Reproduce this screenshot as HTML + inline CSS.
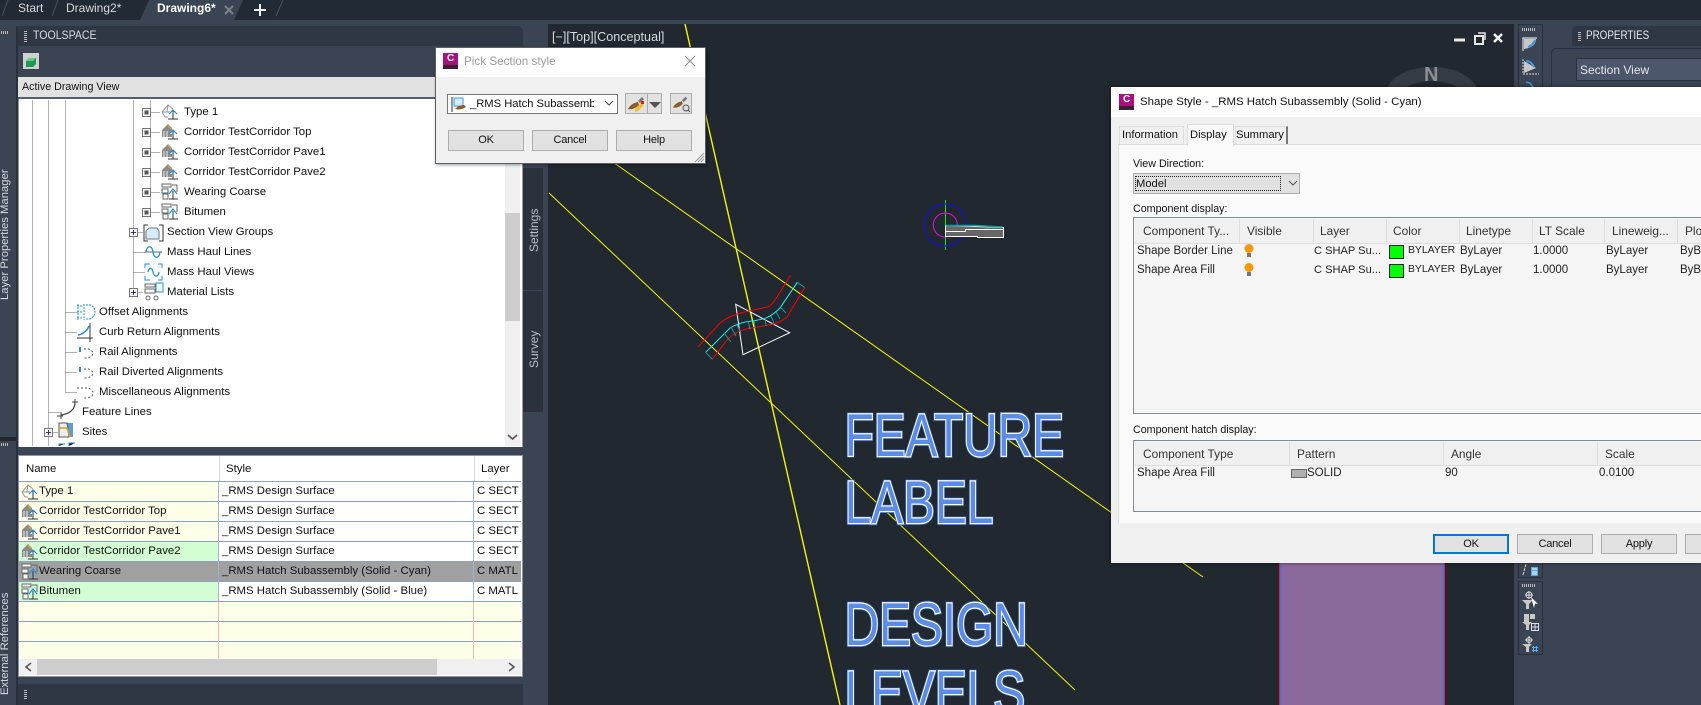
<!DOCTYPE html>
<html><head><meta charset="utf-8"><style>
html,body{margin:0;padding:0;width:1701px;height:705px;overflow:hidden;background:#3b4453;font-family:"Liberation Sans",sans-serif;font-size:11.4px;color:#111}
div,span,svg{position:absolute}
span{white-space:nowrap;line-height:16px}
.b{background:#e1e1e1;border:1px solid #adadad;box-sizing:border-box;text-align:center;font-size:11px;letter-spacing:-.2px;color:#111;line-height:19px}
.v{transform-origin:0 0;transform:rotate(-90deg);color:#d4d8de;font-size:11.3px}
.g{background:#f5f5f5;border:1.5px solid #858a90;box-sizing:border-box}
.ln{background:#8fa3b8;height:1px;left:19px;width:502px}
.c{font-size:11.5px;color:#222}
.h{font-size:11.9px;color:#333}
.sm{font-size:10.4px;color:#222;line-height:16px}
.sx{transform-origin:0 50%}
</style></head><body>
<svg width="0" height="0" style="left:0;top:0"><defs>
<symbol id="surf" viewBox="0 0 17 17"><path d="M1 9L7 2l5 4M1 9l3 5h3M1 9h8M7 2l-1 7" fill="none" stroke="#9a9a9a"/><path d="M8 11l4-4 4 4" fill="none" stroke="#1b8fe0" stroke-width="1.2"/><path d="M12 8v8M7 16h10" stroke="#333"/></symbol>
<symbol id="corr" viewBox="0 0 17 17"><path d="M1 7L7 1l4 4v9H1z" fill="#8a8a8a"/><path d="M3 8v6M6 8v6" stroke="#eee"/><path d="M7 2l3 4" stroke="#e0a030" stroke-width="1.4"/><path d="M8 11l4-4 4 4" fill="#fff" stroke="#1b8fe0" stroke-width="1.2"/><path d="M12 8v8M7 16h10" stroke="#333"/></symbol>
<symbol id="mat" viewBox="0 0 17 17"><path d="M1 1h9v3H1zM1 6h6v4H1zM2 11h5v5H2z" fill="#fff" stroke="#666"/><path d="M11 2h5v7" fill="none" stroke="#666"/><path d="M8 11l4-5 4 5" fill="none" stroke="#1b8fe0" stroke-width="1.2"/><path d="M12 8v8M8 16h9" stroke="#333"/></symbol>
<symbol id="box" viewBox="0 0 9 9"><rect x=".5" y=".5" width="8" height="8" fill="#f4f4f4" stroke="#777"/><rect x="2.5" y="2.5" width="4" height="4" fill="#555"/></symbol>
<symbol id="plus" viewBox="0 0 9 9"><rect x=".5" y=".5" width="8" height="8" fill="#f4f4f4" stroke="#777"/><path d="M2 4.5h5M4.5 2v5" stroke="#336"/></symbol>
<symbol id="brush" viewBox="0 0 20 20"><path d="M1 15c3-5 6-6 10-7l1 3c-3 3-7 5-11 4z" fill="#8a5a2a"/><path d="M11 7l4-4 2 2-4 4z" fill="#777"/></symbol>
</defs></svg>

<!-- top tab bar -->
<div style="left:0;top:0;width:1701px;height:20px;background:#222a35"></div>
<svg style="left:0;top:0" width="300" height="20"><polygon points="140,20 149,0 243,0 234,20" fill="#3b4453"/><path d="M2 16L8 0M52 16L58 0M276 16L283 0" stroke="#4a5362"/></svg>
<span style="left:18px;top:0;color:#d6dae0;font-size:12px">Start</span>
<span style="left:66px;top:0;color:#d6dae0;font-size:12px">Drawing2*</span>
<span style="left:157px;top:0;color:#fff;font-size:12px;font-weight:bold">Drawing6*</span>
<svg style="left:224px;top:3px" width="44" height="14"><path d="M1 3l8 8M9 3l-8 8" stroke="#7c828b" stroke-width="2"/><path d="M36 1v12M30 7h12" stroke="#f0f0f0" stroke-width="2"/></svg>

<!-- left strip -->
<div style="left:0;top:29px;width:16px;height:676px;background:#3b4453"></div>
<div style="left:16px;top:26px;width:2px;height:679px;background:#2a313d"></div>
<div style="left:0;top:437px;width:16px;height:4px;background:#222933"></div>
<div style="left:1px;top:31px;width:7px;height:3px;background:repeating-linear-gradient(90deg,#bbb 0 1px,transparent 1px 2px)"></div>
<div style="left:1px;top:443px;width:7px;height:3px;background:repeating-linear-gradient(90deg,#bbb 0 1px,transparent 1px 2px)"></div>
<span class="v" style="left:-3px;top:300px">Layer Properties Manager</span>
<span class="v" style="left:-3px;top:695px">External References</span>

<!-- toolspace -->
<div style="left:18px;top:26px;width:505px;height:20px;background:#2f3745;border-radius:0 6px 0 0"></div>
<div style="left:24px;top:31px;width:3px;height:11px;background:repeating-linear-gradient(0deg,#bbb 0 1px,transparent 1px 2px)"></div>
<span class="sx" style="left:33px;top:27px;color:#d8dce2;font-size:12px;transform:scaleX(.88)">TOOLSPACE</span>
<div style="left:23px;top:53px;width:16px;height:16px;background:#d0d0d0"></div>
<svg style="left:25px;top:57px" width="12" height="11"><path d="M1 4l3-3h7v6l-3 3H1z" fill="#1f9a50"/><path d="M4 1h7L8 4H1z" fill="#5fd08a"/></svg>
<div style="left:18px;top:77px;width:505px;height:20px;background:#e1e1e1"></div>
<span class="sx" style="left:22px;top:79px;font-size:11.4px;transform:scaleX(.94)">Active Drawing View</span>
<div style="left:18px;top:97px;width:505px;height:2px;background:#555e6b"></div>

<!-- tree -->
<div style="left:18px;top:99px;width:505px;height:348px;background:#fff;border-left:1px solid #99a;border-right:1px solid #99a;box-sizing:border-box"></div>
<svg style="left:18px;top:99px" width="505" height="348">
<g stroke="#666" stroke-dasharray="1 1" fill="none" transform="translate(.5 .5)">
<path d="M14 1v346M30 1v346M47 1v291M115 1v193M132 1v112"/>
<path d="M132 13h10M132 33h10M132 53h10M132 73h10M132 93h10M132 113h10M115 133h10M115 153h12M115 173h12M115 193h10M47 213h12M47 233h12M47 253h12M47 273h12M47 293h12M30 313h12M30 333h10"/>
</g>
<g><use href="#box" x="124" y="9" width="9" height="9"/><use href="#box" x="124" y="29" width="9" height="9"/><use href="#box" x="124" y="49" width="9" height="9"/><use href="#box" x="124" y="69" width="9" height="9"/><use href="#box" x="124" y="89" width="9" height="9"/><use href="#box" x="124" y="109" width="9" height="9"/>
<use href="#plus" x="111" y="129" width="9" height="9"/><use href="#plus" x="111" y="189" width="9" height="9"/><use href="#plus" x="26" y="329" width="9" height="9"/>
<use href="#surf" x="143" y="4" width="17" height="17"/><use href="#corr" x="143" y="24" width="17" height="17"/><use href="#corr" x="143" y="44" width="17" height="17"/><use href="#corr" x="143" y="64" width="17" height="17"/><use href="#mat" x="143" y="84" width="17" height="17"/><use href="#mat" x="143" y="104" width="17" height="17"/>
<path d="M130 126h-4v16h4M141 126h4v16h-4" fill="none" stroke="#333"/><path d="M128 140v-8l3-3h8l2 3v8z" fill="#d4ecff" stroke="#777"/>
<path d="M127 153h17" stroke="#666"/><path d="M128 153c1-7 6-7 7 0s6 7 7 0" fill="none" stroke="#1b8fe0" stroke-width="1.3"/>
<path d="M127 169v-4h5M144 169v-4h-4M127 177v4h5M144 177v4h-4" fill="none" stroke="#1b8fe0"/><path d="M130 173c1-5 4-5 5 0s5 6 6 0" fill="none" stroke="#1b8fe0" stroke-width="1.2"/>
<path d="M127 185h10v3h-10zM127 190h10v4h-10z" fill="#fff" stroke="#666"/><rect x="138" y="184" width="7" height="9" fill="#fff" stroke="#1b8fe0"/><circle cx="130" cy="199" r="2" fill="none" stroke="#666"/><circle cx="138" cy="199" r="2" fill="none" stroke="#666"/>
<path d="M59 207h6M59 213h6M59 219h6M68 206h4c4 1 5 5 5 7s-1 5-5 7h-4M60 205v16M66 205v16" fill="none" stroke="#1b8fe0" stroke-dasharray="2 1"/>
<path d="M59 239h16M72 224v19" stroke="#333"/><path d="M60 236c5-1 9-4 11-9" fill="none" stroke="#1b8fe0" stroke-width="1.5"/>
<rect x="61" y="248" width="2" height="5" fill="#1b8fe0"/><path d="M66 250h5l4 3-1 4-4 2h-5" fill="none" stroke="#555" stroke-dasharray="2 2"/>
<rect x="61" y="268" width="2" height="5" fill="#1b8fe0"/><path d="M66 270h5l4 3-1 4-4 2h-5" fill="none" stroke="#555" stroke-dasharray="2 2"/>
<path d="M59 289h12l4 4-1 4-4 2h-5" fill="none" stroke="#555" stroke-dasharray="2 2"/>
<path d="M43 316c8-1 14-5 14-13" fill="none" stroke="#444" stroke-width="1.2"/><path d="M39 317h6M43 313v7M54 303h6M57 300v6" stroke="#444"/>
<rect x="41" y="324" width="14" height="14" fill="#5d9dd0"/><path d="M41 324h8l2 14H41z" fill="#eee" stroke="#555"/><path d="M41 329h8l3 9" fill="none" stroke="#d4a020" stroke-width="1.5"/>
<path d="M41 347v-2h6M51 347v-3h6" stroke="#1b8fe0"/>
</g>
</svg>
<span style="left:184px;top:104px">Type 1</span>
<span style="left:184px;top:124px">Corridor TestCorridor Top</span>
<span style="left:184px;top:144px">Corridor TestCorridor Pave1</span>
<span style="left:184px;top:164px">Corridor TestCorridor Pave2</span>
<span style="left:184px;top:184px">Wearing Coarse</span>
<span style="left:184px;top:204px">Bitumen</span>
<span style="left:167px;top:224px">Section View Groups</span>
<span style="left:167px;top:244px">Mass Haul Lines</span>
<span style="left:167px;top:264px">Mass Haul Views</span>
<span style="left:167px;top:284px">Material Lists</span>
<span style="left:99px;top:304px">Offset Alignments</span>
<span style="left:99px;top:324px">Curb Return Alignments</span>
<span style="left:99px;top:344px">Rail Alignments</span>
<span style="left:99px;top:364px">Rail Diverted Alignments</span>
<span style="left:99px;top:384px">Miscellaneous Alignments</span>
<span style="left:82px;top:404px">Feature Lines</span>
<span style="left:82px;top:424px">Sites</span>
<div style="left:505px;top:100px;width:15px;height:346px;background:#f0f0f0"></div>
<div style="left:505px;top:213px;width:15px;height:108px;background:#cdcdcd"></div>
<svg style="left:507px;top:433px" width="11" height="9"><path d="M1 2l4.500 4 4.500-4" fill="none" stroke="#555" stroke-width="1.6"/></svg>

<!-- list -->
<div style="left:18px;top:455px;width:505px;height:222px;background:#fff;border:1px solid #8a96a6;box-sizing:border-box"></div>
<div style="left:19px;top:482px;width:199px;height:59px;background:#fffee9"></div>
<div style="left:19px;top:542px;width:199px;height:19px;background:#d3fdd3"></div>
<div style="left:19px;top:562px;width:502px;height:19px;background:#a0a0a0"></div>
<div style="left:19px;top:582px;width:199px;height:19px;background:#d3fdd3"></div>
<div style="left:19px;top:602px;width:502px;height:57px;background:#fffee9"></div>
<div class="ln" style="top:481px"></div><div class="ln" style="top:501px"></div><div class="ln" style="top:521px"></div><div class="ln" style="top:541px"></div><div class="ln" style="top:561px"></div><div class="ln" style="top:581px"></div><div class="ln" style="top:601px"></div><div class="ln" style="top:621px"></div><div class="ln" style="top:641px"></div>
<div style="left:219px;top:456px;width:1px;height:25px;background:#d8d8d8"></div><div style="left:474px;top:456px;width:1px;height:25px;background:#d8d8d8"></div>
<div style="left:218px;top:482px;width:1px;height:119px;background:#a9b6c6"></div><div style="left:473px;top:482px;width:1px;height:119px;background:#a9b6c6"></div>
<div style="left:218px;top:602px;width:1px;height:57px;background:#f4b8b8"></div><div style="left:473px;top:602px;width:1px;height:57px;background:#f4b8b8"></div>
<span style="left:26px;top:461px">Name</span><span style="left:226px;top:461px">Style</span><span style="left:481px;top:461px">Layer</span>
<svg style="left:21px;top:482px" width="17" height="120"><use href="#surf" y="1" width="17" height="17"/><use href="#corr" y="21" width="17" height="17"/><use href="#corr" y="41" width="17" height="17"/><use href="#corr" y="61" width="17" height="17"/><use href="#mat" y="81" width="17" height="17"/><use href="#mat" y="101" width="17" height="17"/></svg>
<span style="left:39px;top:483px">Type 1</span><span style="left:222px;top:483px">_RMS Design Surface</span><span style="left:477px;top:483px">C SECT</span>
<span style="left:39px;top:503px">Corridor TestCorridor Top</span><span style="left:222px;top:503px">_RMS Design Surface</span><span style="left:477px;top:503px">C SECT</span>
<span style="left:39px;top:523px">Corridor TestCorridor Pave1</span><span style="left:222px;top:523px">_RMS Design Surface</span><span style="left:477px;top:523px">C SECT</span>
<span style="left:39px;top:543px">Corridor TestCorridor Pave2</span><span style="left:222px;top:543px">_RMS Design Surface</span><span style="left:477px;top:543px">C SECT</span>
<span style="left:39px;top:563px">Wearing Coarse</span><span style="left:222px;top:563px">_RMS Hatch Subassembly (Solid - Cyan)</span><span style="left:477px;top:563px">C MATL</span>
<span style="left:39px;top:583px">Bitumen</span><span style="left:222px;top:583px">_RMS Hatch Subassembly (Solid - Blue)</span><span style="left:477px;top:583px">C MATL</span>
<div style="left:19px;top:659px;width:502px;height:16px;background:#f0f0f0"></div>
<div style="left:37px;top:659px;width:400px;height:16px;background:#cdcdcd"></div>
<svg style="left:22px;top:661px" width="498" height="12"><path d="M9 2L4 6l5 4M487 2l5 4-5 4" fill="none" stroke="#555" stroke-width="1.6"/></svg>
<div style="left:18px;top:684px;width:505px;height:21px;background:#2f3745"></div>
<div style="left:24px;top:690px;width:3px;height:9px;background:repeating-linear-gradient(0deg,#bbb 0 1px,transparent 1px 2px)"></div>

<!-- vertical side tabs -->
<div style="left:523px;top:168px;width:20px;height:122px;background:#2b323e"></div>
<div style="left:523px;top:291px;width:20px;height:121px;background:#2b323e"></div>
<span class="v" style="left:526px;top:252px;color:#b8bec6;font-size:12px">Settings</span>
<span class="v" style="left:526px;top:368px;color:#b8bec6;font-size:12px">Survey</span>

<!-- viewport -->
<div style="left:548px;top:24px;width:966px;height:681px;background:#212830"></div>
<span style="left:552px;top:29px;color:#d6dae0;font-size:12.6px">[−][Top][Conceptual]</span>
<svg style="left:548px;top:24px" width="966" height="681" viewBox="548 24 966 681">
<path d="M1393 92c10-24 68-24 78 0" fill="none" stroke="#363c44" stroke-width="14"/>
<text x="1424" y="81" font-family="Liberation Sans" font-size="20" font-weight="bold" fill="#8b8f95">N</text>
<path d="M1454 40h11" stroke="#e8e8e8" stroke-width="3"/><rect x="1475" y="36" width="8" height="8" fill="none" stroke="#e8e8e8" stroke-width="2"/><path d="M1478 33h7v7" fill="none" stroke="#e8e8e8" stroke-width="1.5"/><path d="M1494 34l8 8M1502 34l-8 8" stroke="#f2f2f2" stroke-width="2.500"/>
<g stroke="#f5f500" fill="none" stroke-width="1">
<path d="M685 24L840 705" stroke-width="1.400"/>
<path d="M600 153L1203 577"/>
<path d="M549 193L1075 690"/>
</g>
<polygon points="735.700,304.300 789.700,332.700 743,354.700" fill="none" stroke="#fff" stroke-width="1"/>
<path d="M698.300 346.700L720 323Q730 315 745 312Q762 308 768 307Q772 305 777 297L790.700 275" fill="none" stroke="#f00" stroke-width="1"/>
<path d="M712.300 359.300L727 340Q736 330 752 328Q770 325 777 323Q782 321 787 317L805 287" fill="none" stroke="#f00" stroke-width="1"/>
<path d="M705.700 352.300L730 328Q740 322 752 321Q765 319 768 317Q774 314 780 308L797.300 282.300" fill="none" stroke="#20f0f0" stroke-width="1"/>
<path d="M797.300 282.300L804.300 287.300M705.700 352.300L712.300 359.300M724 333l7 9M731 327l5 9M737 325l4 8M748 321l2 8M754 320l1 8M765 318l1 8M771 316l3 7M776 312l4 7M781 308l5 5" fill="none" stroke="#0a9fa0" stroke-width="1"/>
<path d="M945.500 200v50" stroke="#1fe01f"/>
<circle cx="945.300" cy="225" r="21" fill="none" stroke="#1010ee"/>
<circle cx="945.300" cy="225" r="12" fill="none" stroke="#e010e0"/>
<polygon points="945.500,225.500 976.500,226.500 1003.500,227.500 1003.500,237.500 977.500,237.500 977.500,236.500 945.500,236.500" fill="#666" stroke="#fff"/>
<path d="M945.500 231.500h20v-2h38" stroke="#fff" fill="none"/>
<path d="M945.500 225.500h30l27 1.500" stroke="#0a9fa0" stroke-width="1.400" fill="none"/>
<g font-family="Liberation Sans" font-size="60">
<g transform="translate(847 0) scale(.796 1)" fill="#2b5296" stroke="#2b5296" stroke-width="4.200"><text x="-3" y="456">FEATURE</text><text x="-3" y="523">LABEL</text><text x="-3" y="645">DESIGN</text><text x="-3" y="713">LEVELS</text></g>
<g transform="translate(847 0) scale(.796 1)" fill="#fff" stroke="#fff" stroke-width="2.500"><text x="-3" y="456">FEATURE</text><text x="-3" y="523">LABEL</text><text x="-3" y="645">DESIGN</text><text x="-3" y="713">LEVELS</text></g>
<g transform="translate(847 0) scale(.796 1)" fill="#5b8ce8"><text x="-3" y="456">FEATURE</text><text x="-3" y="523">LABEL</text><text x="-3" y="645">DESIGN</text><text x="-3" y="713">LEVELS</text></g>
</g>
<rect x="1279" y="560" width="166" height="145" fill="#8b699b"/>
<path d="M1279.500 560v145M1444.500 560v145" stroke="#e02040"/><path d="M1281 560v145M1443 560v145" stroke="#5a6bd0" stroke-width="1.500"/>
</svg>

<!-- right palettes + properties -->
<div style="left:1518px;top:24px;width:25px;height:70px;border:1px solid #2a313d;box-sizing:border-box"></div>
<div style="left:1522px;top:28px;width:14px;height:3px;background:repeating-linear-gradient(90deg,#bbb 0 1px,transparent 1px 2px)"></div>
<svg style="left:1520px;top:34px" width="20" height="54"><path d="M3 17V4h14" fill="none" stroke="#ddd" stroke-width="1.200"/><path d="M4 5h12c0 5-4 9-12 10z" fill="#c8c8c8"/><path d="M8 13c3-1 6-4 7-7" fill="none" stroke="#3a9ae0" stroke-width="2"/><path d="M3 25v15h16" fill="none" stroke="#ddd" stroke-dasharray="2 1"/><path d="M4 27l12 7-12 5z" fill="#c8c8c8"/><path d="M6 27c4 0 7 3 8 6" fill="none" stroke="#3a9ae0" stroke-width="2"/><path d="M6 48l4 1 3 4" fill="none" stroke="#3a9ae0" stroke-width="1.500"/></svg>
<div style="left:1572px;top:26px;width:129px;height:20px;background:#2f3745;border-radius:5px 0 0 0"></div>
<div style="left:1551px;top:48px;width:150px;height:40px;border:1px solid #2a313d;border-right:0;border-bottom:0;border-radius:5px 0 0 0;box-sizing:border-box"></div>
<div style="left:1578px;top:32px;width:3px;height:9px;background:repeating-linear-gradient(0deg,#bbb 0 1px,transparent 1px 2px)"></div>
<span class="sx" style="left:1586px;top:27px;color:#e4e7ec;font-size:12px;transform:scaleX(.82)">PROPERTIES</span>
<div style="left:1576px;top:58px;width:125px;height:23px;background:#4c566a;border:1px solid #2a313d;border-right:0;box-sizing:border-box"></div>
<span style="left:1580px;top:62px;color:#e4e7ec;font-size:12px">Section View</span>
<div style="left:1518px;top:555px;width:25px;height:23px;border:1px solid #2a313d;box-sizing:border-box"></div>
<div style="left:1518px;top:581px;width:25px;height:74px;border:1px solid #2a313d;box-sizing:border-box"></div>
<div style="left:1522px;top:584px;width:14px;height:3px;background:repeating-linear-gradient(90deg,#bbb 0 1px,transparent 1px 2px)"></div>
<svg style="left:1520px;top:560px" width="22" height="16"><path d="M3 15l3-11" stroke="#ddd" stroke-dasharray="3 1"/><rect x="11" y="7" width="7" height="9" fill="#5aa8e0"/><path d="M12 9h5M12 12h5M12 14h5" stroke="#fff"/></svg>
<svg style="left:1520px;top:581px" width="22" height="74">
<path d="M2 19h11l-4 4v5H6v-5z" fill="#c8c8c8"/><circle cx="9" cy="14" r="3" fill="none" stroke="#ddd"/><path d="M9 10v8M5 14h8" stroke="#ddd"/><path d="M11 16l7 7-3-.5-1 4.500z" fill="#fff"/>
<rect x="4" y="33" width="5" height="8" fill="#c8c8c8"/><rect x="10" y="33" width="5" height="5" fill="#c8c8c8"/><path d="M2 41h10l-3 3v5H6v-5z" fill="#c8c8c8"/><rect x="11.500" y="42.500" width="7" height="7" fill="none" stroke="#ddd"/><path d="M15 42.500v7M11.500 46h7" stroke="#ddd"/>
<path d="M2 63h10l-3 3v5H6v-5z" fill="#c8c8c8"/><circle cx="9" cy="59" r="2.500" fill="none" stroke="#ddd"/><path d="M9 55v8M5 59h8" stroke="#ddd"/><path d="M12 66.500h6M12 69.500h6M13.500 65v6M16.500 65v6" stroke="#5ab0f0"/></svg>

<!-- Pick Section style dialog -->
<div style="left:435px;top:47px;width:271px;height:117px;background:#f0f0f0;border:1px solid #5a5f66;box-sizing:border-box;box-shadow:1px 1px 3px rgba(0,0,0,.4)"></div>
<div style="left:436px;top:48px;width:269px;height:29px;background:#fff"></div>
<div style="left:443px;top:53px;width:15px;height:16px;background:#a8127e"></div>
<div style="left:443px;top:65px;width:15px;height:4px;background:#3a2030"></div>
<span style="left:447px;top:52px;color:#fff;font-size:10px;font-weight:bold;line-height:13px">C</span>
<span style="left:464px;top:54px;color:#9a9a9a;font-size:11.7px">Pick Section style</span>
<svg style="left:684px;top:55px" width="12" height="12"><path d="M1 1l10 10M11 1L1 11" stroke="#888"/></svg>
<div style="left:447px;top:94px;width:171px;height:20px;background:#fff;border:1px solid #7a7a7a;box-sizing:border-box"></div>
<svg style="left:451px;top:96px" width="18" height="17"><path d="M1 1v15" stroke="#333"/><rect x="3" y="2" width="9" height="8" fill="#d4ecff" stroke="#3a9ae0"/><path d="M4 13c3-3 6-4 9-4l2 2c-3 2-6 3-11 2z" fill="#8a5a2a"/></svg>
<span style="left:470px;top:96px;width:124px;overflow:hidden;font-size:11.2px">_RMS Hatch Subassembly</span>
<svg style="left:604px;top:100px" width="11" height="8"><path d="M1 1l4 4 4-4" fill="none" stroke="#444"/></svg>
<div style="left:625px;top:93px;width:37px;height:21px;background:#e1e1e1;border:1px solid #adadad;box-sizing:border-box"></div>
<div style="left:647px;top:93px;width:1px;height:21px;background:#adadad"></div>
<svg style="left:627px;top:94px" width="20" height="20"><use href="#brush" width="20" height="20"/><path d="M8 15l6-6 3 2-6 6-3 1z" fill="#f0c030"/><rect x="14" y="7" width="3" height="3" fill="#e02020"/></svg>
<svg style="left:649px;top:101px" width="12" height="7"><path d="M0 1h12L6 7z" fill="#555"/></svg>
<div style="left:670px;top:93px;width:22px;height:21px;background:#e1e1e1;border:1px solid #adadad;box-sizing:border-box"></div>
<svg style="left:672px;top:94px" width="20" height="20"><use href="#brush" width="18" height="18"/><circle cx="14" cy="14" r="3" fill="#ddd" stroke="#555"/><path d="M16 16l2 2" stroke="#555"/></svg>
<div class="b" style="left:448px;top:130px;width:76px;height:21px">OK</div>
<div class="b" style="left:532px;top:130px;width:76px;height:21px">Cancel</div>
<div class="b" style="left:616px;top:130px;width:76px;height:21px">Help</div>
<svg style="left:694px;top:152px" width="11" height="11"><path d="M10 1L1 10M10 4L4 10M10 7L7 10" stroke="#999"/></svg>

<!-- Shape Style dialog -->
<div style="left:1111px;top:87px;width:590px;height:476px;background:#f0f0f0;box-shadow:0 0 4px rgba(0,0,0,.5)"></div>
<div style="left:1111px;top:87px;width:590px;height:30px;background:#fff"></div>
<div style="left:1119px;top:94px;width:15px;height:16px;background:#a8127e"></div>
<div style="left:1119px;top:106px;width:15px;height:4px;background:#3a2030"></div>
<span style="left:1123px;top:93px;color:#fff;font-size:10px;font-weight:bold;line-height:13px">C</span>
<span style="left:1140px;top:94px;font-size:11.450px;color:#111">Shape Style - _RMS Hatch Subassembly (Solid - Cyan)</span>
<div style="left:1118px;top:144px;width:583px;height:379px;background:#fafafa;border-left:1px solid #ddd;border-top:1px solid #ddd;box-sizing:border-box"></div>
<div style="left:1119px;top:126px;width:65px;height:18px;background:#f0f0f0;border:1px solid #ddd;border-bottom:0;box-sizing:border-box"></div>
<div style="left:1187px;top:124px;width:47px;height:22px;background:#fafafa;border:1px solid #ddd;border-bottom:0;box-sizing:border-box"></div>
<div style="left:1235px;top:126px;width:53px;height:18px;background:#f0f0f0;border:1px solid #ddd;border-right:2px solid #777;border-bottom:0;box-sizing:border-box"></div>
<span style="left:1122px;top:127px;font-size:11.2px">Information</span>
<span style="left:1190px;top:127px;font-size:11.2px">Display</span>
<span style="left:1236px;top:127px;font-size:11.2px">Summary</span>
<span style="left:1133px;top:156px;font-size:10.7px">View Direction:</span>
<div style="left:1133px;top:173px;width:167px;height:21px;background:#e1e1e1;border:1px solid #adadad;box-sizing:border-box"></div>
<div style="left:1135px;top:176px;width:146px;height:15px;border:1px dotted #222;box-sizing:border-box"></div>
<span style="left:1136px;top:176px;font-size:11.200px">Model</span>
<svg style="left:1288px;top:180px" width="10" height="7"><path d="M1 1l4 4 4-4" fill="none" stroke="#555"/></svg>
<span style="left:1133px;top:201px;font-size:10.7px">Component display:</span>
<div class="g" style="left:1133px;top:217px;width:580px;height:197px"></div>
<div style="left:1135px;top:219px;width:566px;height:24px;background:#f0f0f0;border-bottom:1px solid #ddd"></div>
<div style="left:1239px;top:219px;width:1px;height:24px;background:#ddd"></div><div style="left:1313px;top:219px;width:1px;height:24px;background:#ddd"></div><div style="left:1386px;top:219px;width:1px;height:24px;background:#ddd"></div><div style="left:1459px;top:219px;width:1px;height:24px;background:#ddd"></div><div style="left:1532px;top:219px;width:1px;height:24px;background:#ddd"></div><div style="left:1604px;top:219px;width:1px;height:24px;background:#ddd"></div><div style="left:1677px;top:219px;width:1px;height:24px;background:#ddd"></div>
<span class="h" style="left:1143px;top:223px">Component Ty...</span><span class="h" style="left:1247px;top:223px">Visible</span><span class="h" style="left:1320px;top:223px">Layer</span><span class="h" style="left:1393px;top:223px">Color</span><span class="h" style="left:1466px;top:223px">Linetype</span><span class="h" style="left:1539px;top:223px">LT Scale</span><span class="h" style="left:1612px;top:223px">Lineweig...</span><span class="h" style="left:1685px;top:223px">Plo</span>
<span class="c" style="left:1137px;top:243px">Shape Border Line</span><span class="c" style="left:1314px;top:243px;font-size:11.1px">C SHAP Su...</span><span class="sm" style="left:1408px;top:243px">BYLAYER</span><span class="c" style="left:1460px;top:243px">ByLayer</span><span class="c" style="left:1533px;top:243px">1.0000</span><span class="c" style="left:1606px;top:243px">ByLayer</span><span class="c" style="left:1680px;top:243px">ByBl</span>
<span class="c" style="left:1137px;top:262px">Shape Area Fill</span><span class="c" style="left:1314px;top:262px;font-size:11.1px">C SHAP Su...</span><span class="sm" style="left:1408px;top:262px">BYLAYER</span><span class="c" style="left:1460px;top:262px">ByLayer</span><span class="c" style="left:1533px;top:262px">1.0000</span><span class="c" style="left:1606px;top:262px">ByLayer</span><span class="c" style="left:1680px;top:262px">ByBl</span>
<svg style="left:1243px;top:243px" width="12" height="34"><circle cx="6" cy="5.500" r="4.500" fill="#f29a0c"/><rect x="4" y="10" width="4" height="4" fill="#777"/><circle cx="6" cy="24.500" r="4.500" fill="#f29a0c"/><rect x="4" y="29" width="4" height="4" fill="#777"/></svg>
<div style="left:1389px;top:245px;width:15px;height:14px;background:#0f0;border:1px solid #222;box-sizing:border-box"></div>
<div style="left:1389px;top:264px;width:15px;height:14px;background:#0f0;border:1px solid #222;box-sizing:border-box"></div>
<span style="left:1133px;top:422px;font-size:10.7px">Component hatch display:</span>
<div class="g" style="left:1133px;top:440px;width:580px;height:72px"></div>
<div style="left:1135px;top:442px;width:566px;height:23px;background:#f0f0f0;border-bottom:1px solid #ddd"></div>
<div style="left:1289px;top:442px;width:1px;height:23px;background:#ddd"></div><div style="left:1443px;top:442px;width:1px;height:23px;background:#ddd"></div><div style="left:1597px;top:442px;width:1px;height:23px;background:#ddd"></div>
<span class="h" style="left:1143px;top:446px">Component Type</span><span class="h" style="left:1297px;top:446px">Pattern</span><span class="h" style="left:1451px;top:446px">Angle</span><span class="h" style="left:1605px;top:446px">Scale</span>
<span class="c" style="left:1137px;top:465px">Shape Area Fill</span><span class="c" style="left:1307px;top:465px">SOLID</span><span class="c" style="left:1445px;top:465px">90</span><span class="c" style="left:1599px;top:465px">0.0100</span>
<div style="left:1291px;top:469px;width:16px;height:9px;background:#b0b0b0;border:1px solid #666;box-sizing:border-box"></div>
<div style="left:1111px;top:523px;width:590px;height:40px;background:#f0f0f0"></div>
<div class="b" style="left:1433px;top:534px;width:76px;height:20px;border:2px solid #0078d7;line-height:16px">OK</div>
<div class="b" style="left:1517px;top:534px;width:76px;height:20px;line-height:18px">Cancel</div>
<div class="b" style="left:1601px;top:534px;width:76px;height:20px;line-height:18px">Apply</div>
<div class="b" style="left:1685px;top:534px;width:30px;height:20px"></div>
</body></html>
